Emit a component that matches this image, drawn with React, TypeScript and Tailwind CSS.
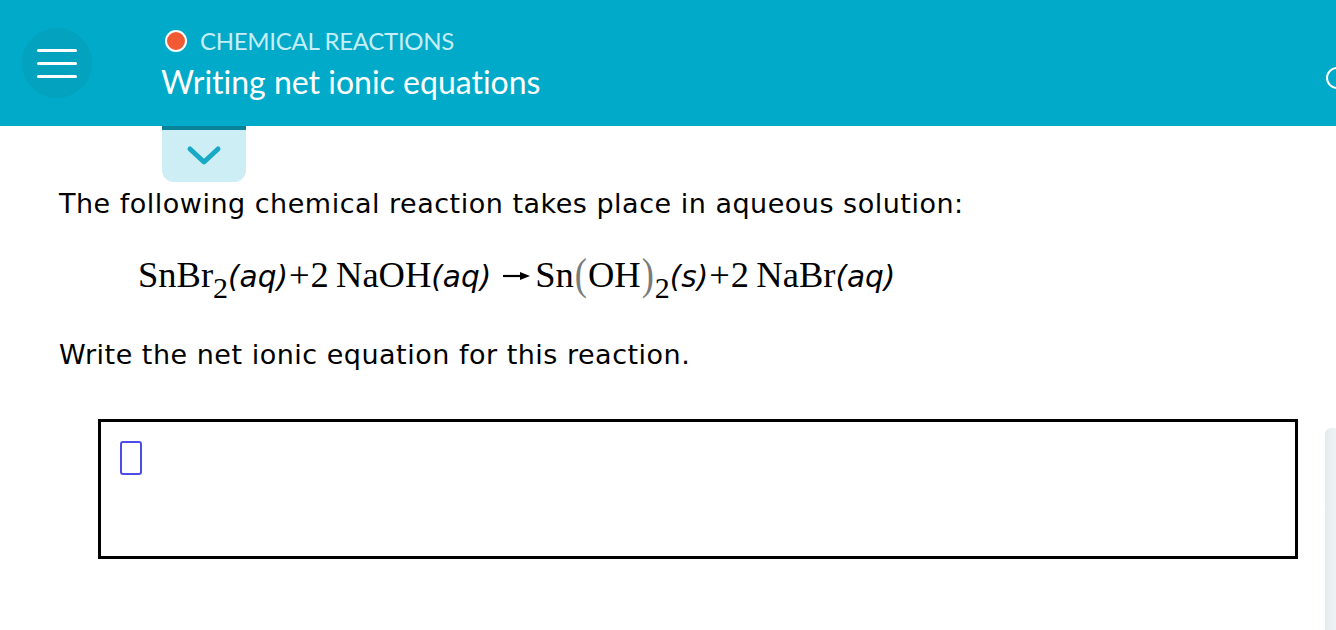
import { useState } from "react";

const SANS = { fontFamily: '"DejaVu Sans", Verdana, sans-serif' };
const HEAD = { fontFamily: 'Lato, "Open Sans", sans-serif', fontVariantLigatures: "none" as const };
const SERIF = { fontFamily: '"Liberation Serif", "Times New Roman", serif' };

// italic state label, e.g. (aq)
function State({ children }: { children: string }) {
  return (
    <span className="italic text-[29.5px]" style={SANS}>
      ({children})
    </span>
  );
}

function Sub({ children }: { children: string }) {
  return (
    <span className="relative top-[11px] text-[30px]" style={SERIF}>
      {children}
    </span>
  );
}

function Equation() {
  return (
    <div className="flex items-baseline text-[36.5px] leading-[40px] text-black" style={SERIF}>
      <span>SnBr</span>
      <Sub>2</Sub>
      <State>aq</State>
      <span className="mx-[1px]">+</span>
      <span>2&#8201;NaOH</span>
      <State>aq</State>
      <span className="ml-[12px] mr-[4px] flex items-center self-center">
        <svg width="28" height="10" viewBox="0 0 28 10" aria-hidden>
          <path d="M0 5h20" stroke="#000" strokeWidth="2.2" />
          <path d="M17 1l10 4-10 4z" fill="#000" />
        </svg>
      </span>
      <span>Sn</span>
      <span className="mx-[1px] inline-block scale-y-[1.2] text-[#7a7a7a]">(</span>
      <span>OH</span>
      <span className="mx-[1px] inline-block scale-y-[1.2] text-[#7a7a7a]">)</span>
      <Sub>2</Sub>
      <State>s</State>
      <span className="mx-[1px]">+</span>
      <span>2&#8201;NaBr</span>
      <State>aq</State>
    </div>
  );
}

export default function App() {
  const [open, setOpen] = useState(false);

  return (
    <div className="relative h-[630px] w-[1336px] overflow-hidden bg-white">
      {/* top bar */}
      <header className="flex h-[126px] items-center bg-[#00aac8]">
        <button
          className="ml-[22px] flex h-[70px] w-[70px] flex-col items-center justify-center gap-[10px] rounded-full bg-[#03a2bf]"
          aria-label="menu"
        >
          <span className="h-[3px] w-[40px] rounded-full bg-white" />
          <span className="h-[3px] w-[40px] rounded-full bg-white" />
          <span className="h-[3px] w-[40px] rounded-full bg-white" />
        </button>
        <div className="ml-[69px] flex flex-col" style={HEAD}>
          <div className="flex items-center gap-[13px] pl-[4px]">
            <span className="h-[22px] w-[22px] rounded-full border-2 border-white bg-[#f15a33]" />
            <span className="text-[24px] leading-none tracking-[-0.3px] text-[#c5eef6]">
              CHEMICAL REACTIONS
            </span>
          </div>
          <div className="mt-[13px] text-[32px] leading-none text-white">
            Writing net ionic equations
          </div>
        </div>
        <span className="ml-auto mr-[-12px] mt-[30px] h-[22px] w-[22px] rounded-full border-2 border-white" />
      </header>

      {/* collapse tab */}
      <button
        onClick={() => setOpen(!open)}
        className="ml-[162px] flex h-[56px] w-[84px] items-center justify-center rounded-b-[12px] border-t-4 border-[#0a8299] bg-[#cdeef4]"
        aria-label="toggle"
      >
        <svg width="38" height="24" viewBox="0 0 38 24" fill="none" aria-hidden>
          <path
            d="M5 5l14 13L33 5"
            stroke="#17a9c6"
            strokeWidth="5"
            strokeLinecap="round"
            strokeLinejoin="round"
          />
        </svg>
      </button>

      <main className="pl-[59px] pr-[39px]" style={SANS}>
        <p className="mt-[6px] text-[27px] leading-[32px] tracking-[0.5px] text-black">
          The following chemical reaction takes place in aqueous solution:
        </p>
        <div className="ml-[79px] mt-[35px]">
          <Equation />
        </div>
        <p className="mt-[42px] text-[27px] leading-[32px] tracking-[0.5px] text-black">
          Write the net ionic equation for this reaction.
        </p>

        <div className="ml-[39px] mt-[48px] h-[140px] w-[1200px] border-[3px] border-black pl-[19px] pt-[19px]">
          <span className="block h-[34px] w-[22px] rounded-[3px] border-2 border-[#4c4ce6]" />
        </div>
      </main>

      {/* side panel edge */}
      <div className="absolute bottom-0 left-[1325px] top-[428px] w-[20px] rounded-tl-[6px] bg-gradient-to-r from-[#e4ecef] to-[#f6f8f9]" />
    </div>
  );
}
